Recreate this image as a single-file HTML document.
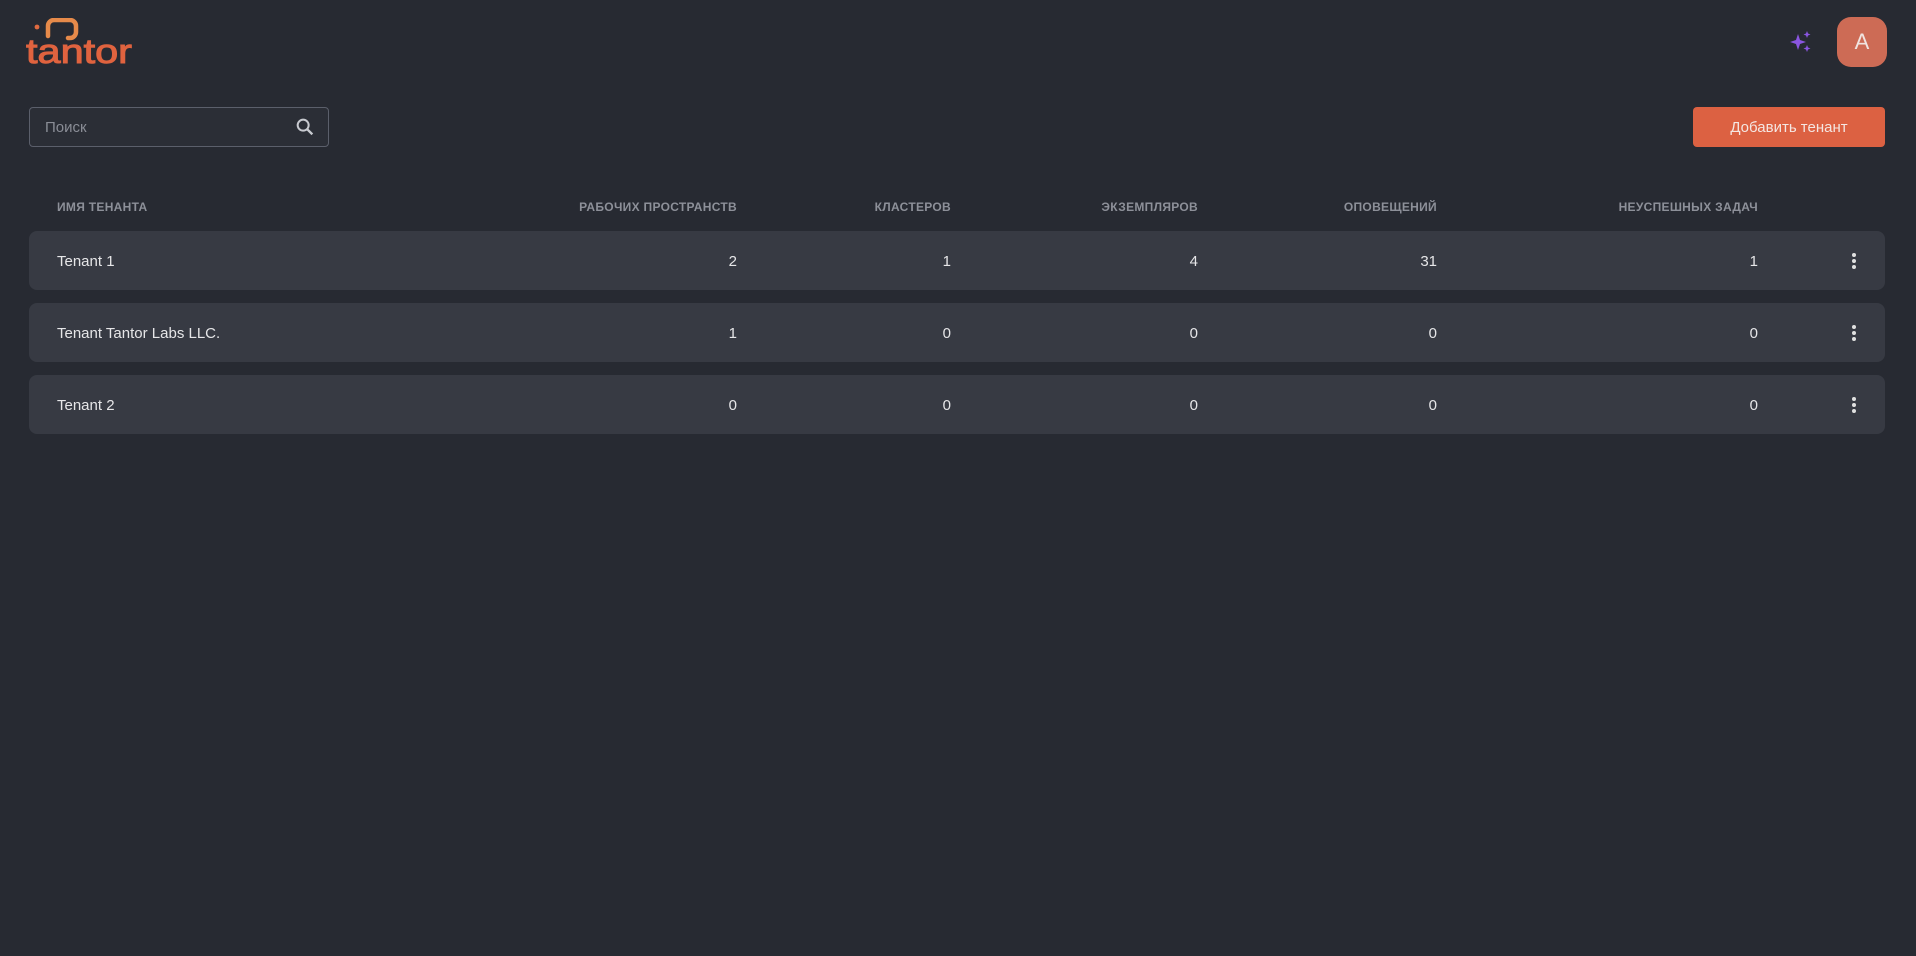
<!DOCTYPE html>
<html><head><meta charset="utf-8"><style>
*{box-sizing:border-box;margin:0;padding:0}
body{width:1916px;height:956px;background:#272a32;font-family:"Liberation Sans",sans-serif;color:#e6e6e8;position:relative;overflow:hidden}
.abs{position:absolute}
.search{left:29px;top:107px;width:300px;height:40px;border:1px solid #5b5f6b;border-radius:4px;background:#2b2e36}
.search span{position:absolute;left:15px;top:11px;font-size:15px;color:#8a8d96}
.btn{left:1693px;top:107px;width:192px;height:40px;background:#dc6142;border-radius:4px;color:#f4e6e2;font-size:15px;text-align:center;line-height:42px}
.av{left:1837px;top:17px;width:50px;height:50px;border-radius:14px;background:#cd6b55;color:#f0e4e0;font-size:22px;text-align:center;line-height:50px}
.hd{top:200px;font-size:12px;font-weight:bold;color:#8d9099;letter-spacing:.3px}
.row{left:29px;width:1856px;height:59px;background:#373a43;border-radius:8px}
.c{position:absolute;top:22px;font-size:15px;color:#e6e6e8}
.r{text-align:right;width:100px}
.dots{position:absolute;left:1823px;top:22px;width:4px}
.dots i{display:block;width:4px;height:4px;border-radius:2px;background:#e0e0e0;margin-bottom:2px}
</style></head><body>
<svg class="abs" style="left:26px;top:18px" width="110" height="48" viewBox="0 0 110 48">
<path d="M22 18 V8 a6 6 0 0 1 6-6 H44 a6 6 0 0 1 6 6 V14 a6 6 0 0 1 -6 6 H42" fill="none" stroke="#e68a4a" stroke-width="4.5" stroke-linecap="round"/>
<circle cx="11" cy="9" r="2.4" fill="#e06a40"/>
<text x="0" y="45" font-family="Liberation Sans,sans-serif" font-size="34" fill="#e0633f" textLength="106" lengthAdjust="spacingAndGlyphs" stroke="#e0633f" stroke-width="1">tantor</text>
</svg>
<svg class="abs" style="left:1789px;top:30px" width="24" height="24" viewBox="0 0 24 24" fill="#8a55e0">
<path d="M7 3 L9 9 L15 11 L9 13 L7 19 L5 13 L-1 11 L5 9Z" transform="translate(2,1)"/>
<path d="M18 1 l1 2.5 l2.5 1 l-2.5 1 l-1 2.5 l-1-2.5 l-2.5-1 l2.5-1z"/>
<path d="M18 15 l1 2.5 l2.5 1 l-2.5 1 l-1 2.5 l-1-2.5 l-2.5-1 l2.5-1z"/>
</svg>
<div class="abs av">A</div>
<div class="abs search"><span>Поиск</span>
<svg style="position:absolute;left:264px;top:8px" width="22" height="22" viewBox="0 0 24 24"><circle cx="10" cy="10" r="6" fill="none" stroke="#c8cad0" stroke-width="2.2"/><path d="M14.5 14.5 L20 20" stroke="#c8cad0" stroke-width="2.6"/></svg></div>
<div class="abs btn">Добавить тенант</div>
<div class="abs hd" style="left:57px">ИМЯ ТЕНАНТА</div>
<div class="abs hd" style="left:537px;width:200px;text-align:right">РАБОЧИХ ПРОСТРАНСТВ</div>
<div class="abs hd" style="left:751px;width:200px;text-align:right">КЛАСТЕРОВ</div>
<div class="abs hd" style="left:998px;width:200px;text-align:right">ЭКЗЕМПЛЯРОВ</div>
<div class="abs hd" style="left:1237px;width:200px;text-align:right">ОПОВЕЩЕНИЙ</div>
<div class="abs hd" style="left:1558px;width:200px;text-align:right">НЕУСПЕШНЫХ ЗАДАЧ</div>

<div class="abs row" style="top:231px"><div class="c" style="left:28px">Tenant 1</div><div class="c r" style="left:608px">2</div><div class="c r" style="left:822px">1</div><div class="c r" style="left:1069px">4</div><div class="c r" style="left:1308px">31</div><div class="c r" style="left:1629px">1</div><div class="dots"><i></i><i></i><i></i></div></div>
<div class="abs row" style="top:303px"><div class="c" style="left:28px">Tenant Tantor Labs LLC.</div><div class="c r" style="left:608px">1</div><div class="c r" style="left:822px">0</div><div class="c r" style="left:1069px">0</div><div class="c r" style="left:1308px">0</div><div class="c r" style="left:1629px">0</div><div class="dots"><i></i><i></i><i></i></div></div>
<div class="abs row" style="top:375px"><div class="c" style="left:28px">Tenant 2</div><div class="c r" style="left:608px">0</div><div class="c r" style="left:822px">0</div><div class="c r" style="left:1069px">0</div><div class="c r" style="left:1308px">0</div><div class="c r" style="left:1629px">0</div><div class="dots"><i></i><i></i><i></i></div></div>
</body></html>
